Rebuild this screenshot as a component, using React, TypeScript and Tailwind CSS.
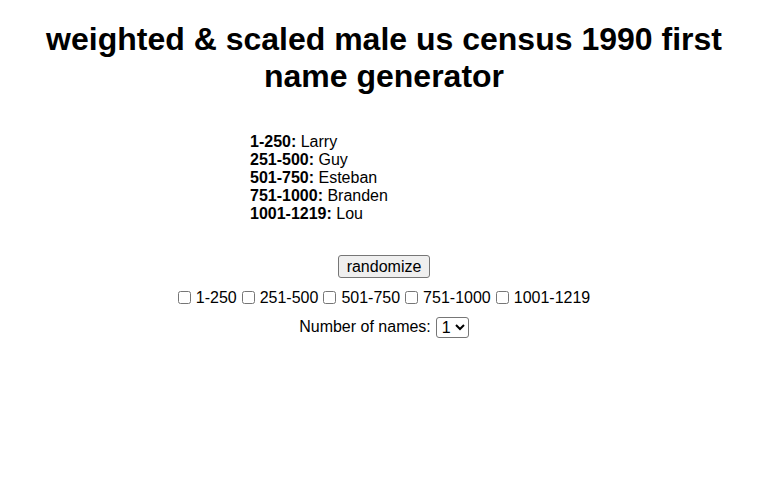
import { useState } from 'react';

const names = [
    { range: '1-250', name: 'Larry' },
    { range: '251-500', name: 'Guy' },
    { range: '501-750', name: 'Esteban' },
    { range: '751-1000', name: 'Branden' },
    { range: '1001-1219', name: 'Lou' },
];

export default function App() {
    const [count, setCount] = useState('1');

    return (
        <div className="min-h-screen bg-white text-black font-['Liberation_Sans',Arial,sans-serif] text-[16px]">
            <h1 className="text-[32px] font-bold leading-[37px] text-center pt-[21px] px-2">
                weighted &amp; scaled male us census 1990 first name generator
            </h1>

            <div className="w-[268px] mx-auto mt-[38px] leading-[18px]">
                {names.map((n) => (
                    <div key={n.range}>
                        <b>{n.range}:</b> {n.name}
                    </div>
                ))}
            </div>

            <div className="flex justify-center mt-[32px]">
                <button className="border border-[#767676] rounded-[3px] bg-[#efefef] px-[8px] py-[1px] leading-[19px] text-[16px]">
                    randomize
                </button>
            </div>

            <div className="flex justify-center items-center gap-[5px] mt-[10px] h-[19px]">
                {names.map((n) => (
                    <label key={n.range} className="flex items-center">
                        <input type="checkbox" className="w-[13px] h-[13px] m-0 mr-[5px]" />
                        <span>{n.range}</span>
                    </label>
                ))}
            </div>

            <div className="flex justify-center items-center mt-[8px]">
                <span>Number of names:</span>
                <select
                    value={count}
                    onChange={(e) => setCount(e.target.value)}
                    className="ml-[5px] border border-[#767676] rounded-[3px] bg-white text-[16px] h-[21px] px-[1px]"
                >
                    {[1, 2, 3, 4, 5].map((i) => (
                        <option key={i} value={String(i)}>{i}</option>
                    ))}
                </select>
            </div>
        </div>
    );
}
